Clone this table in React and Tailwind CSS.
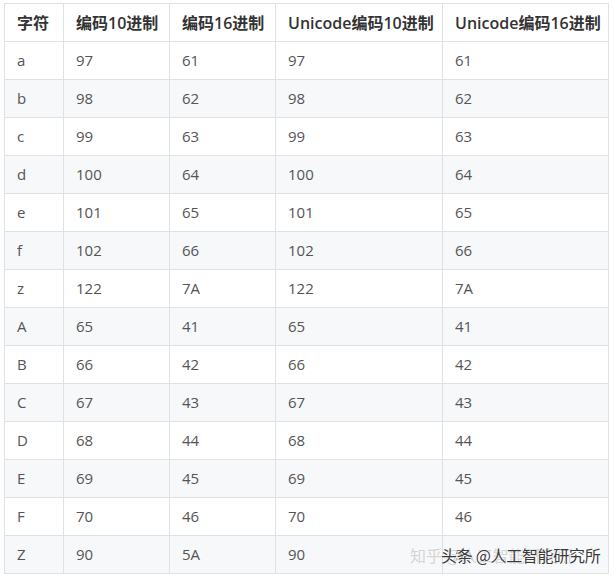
import React from "react";

const rows = [
  ["a", "97", "61", "97", "61"],
  ["b", "98", "62", "98", "62"],
  ["c", "99", "63", "99", "63"],
  ["d", "100", "64", "100", "64"],
  ["e", "101", "65", "101", "65"],
  ["f", "102", "66", "102", "66"],
  ["z", "122", "7A", "122", "7A"],
  ["A", "65", "41", "65", "41"],
  ["B", "66", "42", "66", "42"],
  ["C", "67", "43", "67", "43"],
  ["D", "68", "44", "68", "44"],
  ["E", "69", "45", "69", "45"],
  ["F", "70", "46", "70", "46"],
  ["Z", "90", "5A", "90", "5A"],
];

const headers = ["字符", "编码10进制", "编码16进制", "Unicode编码10进制", "Unicode编码16进制"];
const widths = ["w-[59px]", "w-[106px]", "w-[106px]", "w-[167px]", "w-[166px]"];

export default function App() {
  return (
    <div className="relative w-[614px] h-[577px] overflow-hidden bg-white pt-[3px] pl-[4px] font-['Open_Sans','Noto_Sans_CJK_SC',sans-serif]">
      <table className="table-fixed border-collapse w-[605px]">
        <colgroup>
          {widths.map((w, i) => (
            <col key={i} className={w} />
          ))}
        </colgroup>
        <thead>
          <tr className="h-[38px] bg-white">
            {headers.map((h, i) => (
              <th
                key={i}
                className="border border-[#dfe2e5] px-[12px] text-left text-[16px] font-semibold text-[#333] whitespace-nowrap"
              >
                {h}
              </th>
            ))}
          </tr>
        </thead>
        <tbody>
          {rows.map((r, ri) => (
            <tr key={ri} className={`h-[38px] ${ri % 2 === 1 ? "bg-[#f6f8fa]" : "bg-white"}`}>
              {r.map((c, ci) => (
                <td
                  key={ci}
                  className="border border-[#dfe2e5] px-[12px] text-left text-[15px] text-[#555]"
                >
                  {c}
                </td>
              ))}
            </tr>
          ))}
        </tbody>
      </table>
      <div className="absolute left-[410px] top-[542px] whitespace-nowrap text-[16px] leading-[26px] text-[#d4d4d4] font-['Noto_Sans_CJK_SC',sans-serif] [text-shadow:0_0_2px_#fff]">
        知乎 @人工智能研究所
      </div>
      <div className="absolute left-[441px] top-[542px] whitespace-nowrap text-[16px] leading-[26px] text-[#3a3a3a] font-['Noto_Sans_CJK_SC',sans-serif] tracking-[-0.3px] [text-shadow:0_0_2px_#fff,0_0_1px_#fff]">
        头条 @人工智能研究所
      </div>
    </div>
  );
}
